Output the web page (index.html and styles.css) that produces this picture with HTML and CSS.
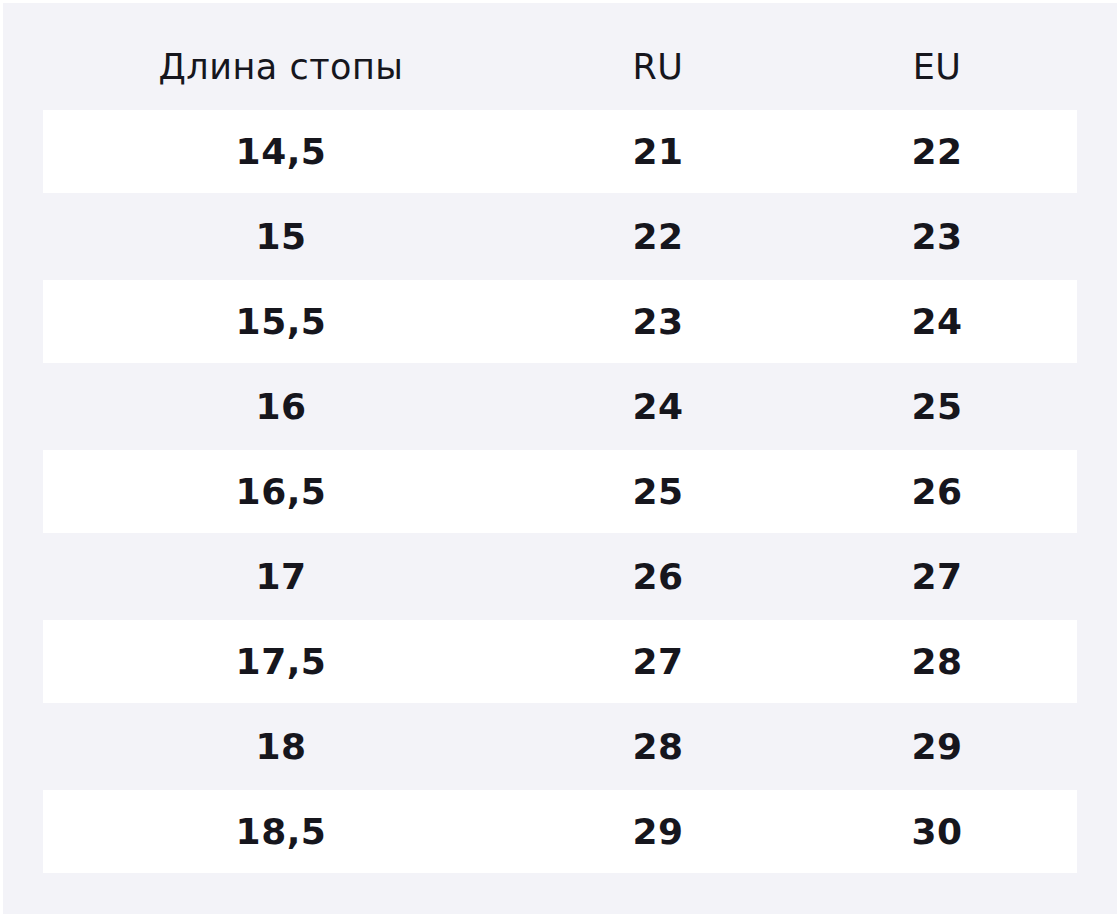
FILE: index.html
```html
<!DOCTYPE html>
<html lang="ru">
<head>
<meta charset="utf-8">
<title>Размеры</title>
<link rel="stylesheet" href="styles.css">
</head>
<body>
<div class="sheet">
  <div class="table">
    <div class="row head"><div>Длина стопы</div><div>RU</div><div>EU</div></div>
    <div class="row alt"><div>14,5</div><div>21</div><div>22</div></div>
    <div class="row"><div>15</div><div>22</div><div>23</div></div>
    <div class="row alt"><div>15,5</div><div>23</div><div>24</div></div>
    <div class="row"><div>16</div><div>24</div><div>25</div></div>
    <div class="row alt"><div>16,5</div><div>25</div><div>26</div></div>
    <div class="row"><div>17</div><div>26</div><div>27</div></div>
    <div class="row alt"><div>17,5</div><div>27</div><div>28</div></div>
    <div class="row"><div>18</div><div>28</div><div>29</div></div>
    <div class="row alt"><div>18,5</div><div>29</div><div>30</div></div>
  </div>
</div>
</body>
</html>
```

FILE: styles.css
```css
html, body {
  margin: 0;
  padding: 0;
  background: #ffffff;
}
.sheet {
  margin: 3px;
  width: 1114px;
  height: 911px;
  box-sizing: border-box;
  padding: 40px 40px 0 40px;
  background: #f3f3f8;
  font-family: "DejaVu Sans", sans-serif;
  color: #16161d;
}
.table {
  width: 1034px;
  display: flex;
  flex-direction: column;
  gap: 2px;
}
.row {
  display: grid;
  grid-template-columns: 476px 278px 280px;
  height: 83px;
  align-items: center;
  text-align: center;
  font-size: 36px;
  font-weight: bold;
  letter-spacing: 0.5px;
}
.row.alt {
  background: #ffffff;
}
.row.head {
  height: 65px;
  box-sizing: border-box;
  padding-bottom: 17px;
  font-size: 35px;
  font-weight: normal;
  letter-spacing: 0.5px;
}
```
